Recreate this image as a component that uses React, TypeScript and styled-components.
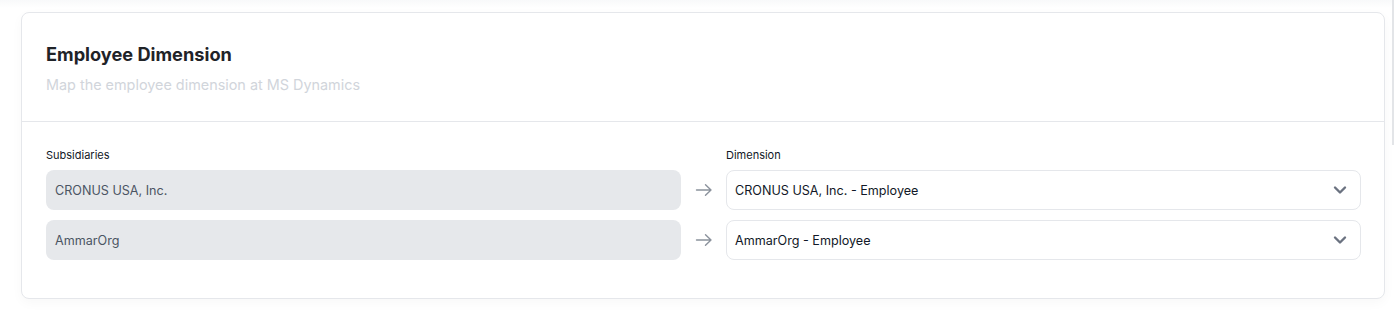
import styled, { createGlobalStyle } from "styled-components";

const GlobalStyle = createGlobalStyle`
  html, body {
    margin: 0;
    padding: 0;
    background: #ffffff;
    font-family: Inter, "Liberation Sans", sans-serif;
  }
  * {
    box-sizing: border-box;
  }
`;

const Page = styled.div`
  width: 1394px;
  height: 314px;
  display: flex;
  background: linear-gradient(#f8f9fa 0px, #ffffff 8px);
`;

const Main = styled.div`
  flex: 1;
  padding: 12px 7px 0 21px;
`;

const ScrollTrack = styled.div`
  width: 2px;
  height: 314px;
  background: #ffffff;
  display: flex;
  flex-direction: column;
`;

const ScrollThumb = styled.div`
  height: 145px;
  background: #e3e5e8;
`;

const Card = styled.section`
  background: #ffffff;
  border: 1px solid #e5e7eb;
  border-radius: 8px;
  box-shadow: 0 4px 12px rgba(17, 24, 39, 0.03);
`;

const CardHeader = styled.div`
  padding: 29px 24px 26px;
  border-bottom: 1px solid #e5e7eb;
`;

const Title = styled.h2`
  margin: 0;
  font-size: 18.2px;
  line-height: 24px;
  font-weight: 700;
  color: #1f2328;
`;

const Subtitle = styled.p`
  margin: 9px 0 0;
  font-size: 14.4px;
  line-height: 20px;
  color: #d1d5db;
`;

const CardBody = styled.div`
  padding: 26px 23px 38px 24px;
  display: grid;
  grid-template-columns: 1fr 45px 1fr;
  row-gap: 10px;
  align-items: center;
`;

const Label = styled.div<{ $col: number }>`
  grid-column: ${(p) => p.$col};
  font-size: 11px;
  line-height: 14px;
  color: #111827;
  margin-bottom: -2px;
`;

const ReadOnlyField = styled.div`
  height: 40px;
  border-radius: 8px;
  background: #e6e8eb;
  display: flex;
  align-items: center;
  padding: 0 9px;
  font-size: 12.6px;
  color: #4b5563;
`;

const Arrow = styled.div`
  display: flex;
  justify-content: center;
`;

const SelectBox = styled.div`
  height: 40px;
  border-radius: 8px;
  border: 1px solid #e5e7eb;
  background: #ffffff;
  display: flex;
  align-items: center;
  justify-content: space-between;
  padding: 0 12px 0 8px;
  font-size: 12.6px;
  color: #111827;
`;

const Chevron = () => (
  <svg width="16" height="16" viewBox="0 0 16 16" fill="none">
    <path
      d="M3 5.5 L8 10.5 L13 5.5"
      stroke="#6b7280"
      strokeWidth="2.4"
      strokeLinecap="round"
      strokeLinejoin="round"
    />
  </svg>
);

const ArrowIcon = () => (
  <svg width="18" height="14" viewBox="0 0 18 14" fill="none">
    <path
      d="M1.5 7 H16 M10.5 1.8 L16 7 L10.5 12.2"
      stroke="#8b929c"
      strokeWidth="1.4"
      strokeLinecap="round"
      strokeLinejoin="round"
    />
  </svg>
);

const rows = [
  { subsidiary: "CRONUS USA, Inc.", dimension: "CRONUS USA, Inc. - Employee" },
  { subsidiary: "AmmarOrg", dimension: "AmmarOrg - Employee" },
];

export default function App() {
  return (
    <>
      <GlobalStyle />
      <Page>
        <Main>
          <Card>
            <CardHeader>
              <Title>Employee Dimension</Title>
              <Subtitle>Map the employee dimension at MS Dynamics</Subtitle>
            </CardHeader>
            <CardBody>
              <Label $col={1}>Subsidiaries</Label>
              <Label $col={3}>Dimension</Label>
              {rows.map((r) => (
                <>
                  <ReadOnlyField key={r.subsidiary + "-s"}>{r.subsidiary}</ReadOnlyField>
                  <Arrow key={r.subsidiary + "-a"}>
                    <ArrowIcon />
                  </Arrow>
                  <SelectBox key={r.subsidiary + "-d"}>
                    {r.dimension}
                    <Chevron />
                  </SelectBox>
                </>
              ))}
            </CardBody>
          </Card>
        </Main>
        <ScrollTrack>
          <ScrollThumb />
        </ScrollTrack>
      </Page>
    </>
  );
}
